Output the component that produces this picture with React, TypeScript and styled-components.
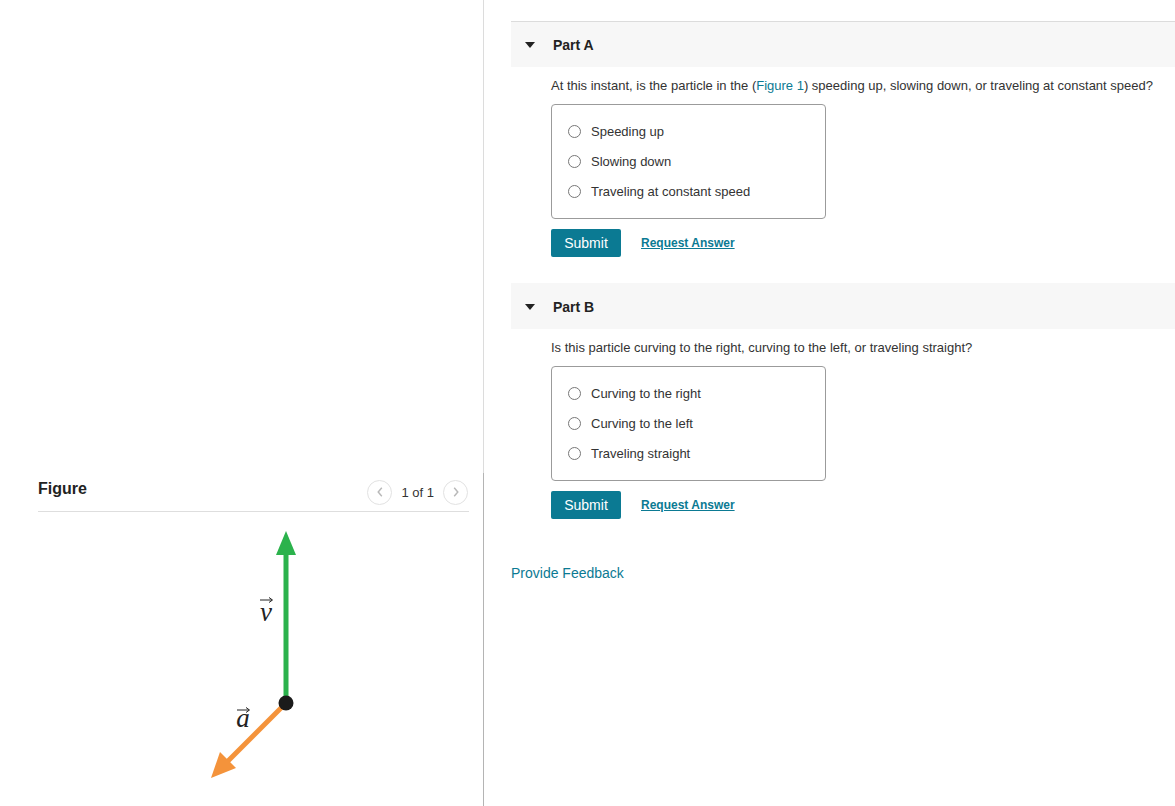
import * as React from 'react'
import styled, { createGlobalStyle } from 'styled-components'

const GlobalStyle = createGlobalStyle`
  html, body {
    margin: 0;
    padding: 0;
    background: #fff;
  }
  body {
    font-family: 'Liberation Sans', Arial, sans-serif;
    color: #333;
  }
`

const teal = '#0b7a93'

type Part = {
  title: string
  question: React.ReactNode
  options: string[]
}

// built lazily so the styled link below is defined by then
const getParts = (): Part[] => [
  {
    title: 'Part A',
    question: (
      <>
        At this instant, is the particle in the (<FigureLink>Figure 1</FigureLink>) speeding up, slowing down, or
        traveling at constant speed?
      </>
    ),
    options: ['Speeding up', 'Slowing down', 'Traveling at constant speed'],
  },
  {
    title: 'Part B',
    question: 'Is this particle curving to the right, curving to the left, or traveling straight?',
    options: ['Curving to the right', 'Curving to the left', 'Traveling straight'],
  },
]

const App: React.FC = () => {
  const [answers, setAnswers] = React.useState<Record<string, string>>({})
  const parts = getParts()

  return (
    <Page>
      <GlobalStyle />
      <LeftPane>
        <FigurePanel>
          <FigureHeader>
            <FigureTitle>Figure</FigureTitle>
            <Pager>
              <NavButton aria-label="previous">
                <Chevron viewBox="0 0 10 10">
                  <path d="M6.5 1.5 L3.5 5 L6.5 8.5" />
                </Chevron>
              </NavButton>
              <PageCount>1 of 1</PageCount>
              <NavButton aria-label="next">
                <Chevron viewBox="0 0 10 10">
                  <path d="M3.5 1.5 L6.5 5 L3.5 8.5" />
                </Chevron>
              </NavButton>
            </Pager>
          </FigureHeader>
          <Drawing width="432" height="293" viewBox="0 0 432 293">
            {/* velocity */}
            <line x1="248" y1="191" x2="248" y2="40" stroke="#2bb24c" strokeWidth="5" />
            <polygon points="238,43 258,43 248,19" fill="#2bb24c" />
            {/* acceleration */}
            <line x1="248" y1="191" x2="189" y2="250" stroke="#f4933b" strokeWidth="5" />
            <polygon points="198,256 182,240 173,266" fill="#f4933b" />
            <circle cx="248" cy="191" r="7.5" fill="#1b1b1b" />
            <VecLabel x="228" y="109">v</VecLabel>
            <path d="M222 88 H234 M231 85.5 L234.5 88 L231 90.5" stroke="#222" strokeWidth="1" fill="none" />
            <VecLabel x="205" y="215">a</VecLabel>
            <path d="M199 198 H211 M208 195.5 L211.5 198 L208 200.5" stroke="#222" strokeWidth="1" fill="none" />
          </Drawing>
        </FigurePanel>
      </LeftPane>

      <RightPane>
        {parts.map((part) => (
          <Section key={part.title}>
            <PartHeader $first={part.title === 'Part A'}>
              <Caret viewBox="0 0 10 6">
                <polygon points="0,0 10,0 5,6" />
              </Caret>
              <PartTitle>{part.title}</PartTitle>
            </PartHeader>
            <PartBody>
              <Question>{part.question}</Question>
              <Choices>
                {part.options.map((opt) => (
                  <Choice key={opt}>
                    <Radio
                      type="radio"
                      name={part.title}
                      checked={answers[part.title] === opt}
                      onChange={() => setAnswers({ ...answers, [part.title]: opt })}
                    />
                    {opt}
                  </Choice>
                ))}
              </Choices>
              <Actions>
                <SubmitButton>Submit</SubmitButton>
                <RequestLink href="#">Request Answer</RequestLink>
              </Actions>
            </PartBody>
          </Section>
        ))}
        <Feedback href="#">Provide Feedback</Feedback>
      </RightPane>
    </Page>
  )
}

const Page = styled.div`
  display: grid;
  grid-template-columns: 484px 1fr;
  height: 806px;
  overflow: hidden;
`

const LeftPane = styled.div`
  display: flex;
  flex-direction: column;
  justify-content: flex-end;
  border-right: 1px solid #dcdcdc;
`

const FigurePanel = styled.div`
  height: 333px;
  margin-right: -1px;
  padding: 0 14px 0 38px;
  border-right: 1px solid #b4b4b4;
  display: flex;
  flex-direction: column;
`

const FigureHeader = styled.div`
  display: flex;
  align-items: center;
  justify-content: space-between;
  height: 38px;
  border-bottom: 1px solid #dedede;
`

const FigureTitle = styled.h2`
  margin: 0 0 6px;
  font-size: 16px;
  font-weight: bold;
  color: #222;
`

const Pager = styled.div`
  display: flex;
  align-items: center;
  gap: 9px;
  margin-right: 1px;
`

const NavButton = styled.button`
  width: 25px;
  height: 25px;
  padding: 0;
  border: 1px solid #e2e2e2;
  border-radius: 50%;
  background: #fff;
  display: flex;
  align-items: center;
  justify-content: center;
`

const Chevron = styled.svg`
  width: 12px;
  height: 12px;
  fill: none;
  stroke: #b8b8b8;
  stroke-width: 1.2;
`

const PageCount = styled.span`
  font-size: 13px;
  color: #333;
`

const Drawing = styled.svg`
  display: block;
`

const VecLabel = styled.text`
  font-family: 'Liberation Serif', 'Times New Roman', serif;
  font-style: italic;
  font-size: 27px;
  fill: #222;
  text-anchor: middle;
`

const RightPane = styled.div`
  padding: 21px 0 0 27px;
  display: flex;
  flex-direction: column;
  align-items: flex-start;
`

const Section = styled.section`
  align-self: stretch;
  margin-bottom: 26px;
`

const PartHeader = styled.div<{ $first?: boolean }>`
  display: flex;
  align-items: center;
  height: 46px;
  padding-left: 14px;
  background: #f7f7f7;
  border-top: 1px solid ${(p) => (p.$first ? '#dcdcdc' : '#f7f7f7')};
  box-sizing: border-box;
`

const Caret = styled.svg`
  width: 10px;
  height: 6px;
  fill: #222;
  margin-right: 18px;
`

const PartTitle = styled.h3`
  margin: 0;
  font-size: 14px;
  font-weight: bold;
  color: #222;
`

const PartBody = styled.div`
  padding-left: 40px;
`

const Question = styled.p`
  margin: 10px 0 10px;
  font-size: 13px;
  line-height: 17px;
  color: #333;
`

const FigureLink = styled.a`
  color: ${teal};
  text-decoration: none;
`

const Choices = styled.div`
  width: 273px;
  padding: 11px 0 12px;
  border: 1px solid #9b9b9b;
  border-radius: 4px;
`

const Choice = styled.label`
  display: flex;
  align-items: center;
  height: 30px;
  padding-left: 16px;
  font-size: 13px;
  color: #333;
`

const Radio = styled.input`
  width: 13px;
  height: 13px;
  margin: 0 10px 0 0;
  appearance: none;
  border: 1px solid #777;
  border-radius: 50%;
  background: #fff;
  &:checked {
    background: radial-gradient(circle, #0b7a93 0 3px, #fff 3.5px);
    border-color: ${teal};
  }
`

const Actions = styled.div`
  display: flex;
  align-items: center;
  gap: 20px;
  margin-top: 10px;
`

const SubmitButton = styled.button`
  width: 70px;
  height: 28px;
  border: none;
  border-radius: 2px;
  background: ${teal};
  color: #fff;
  font-family: inherit;
  font-size: 14px;
`

const RequestLink = styled.a`
  font-size: 12px;
  font-weight: bold;
  color: ${teal};
  text-decoration: underline;
`

const Feedback = styled.a`
  margin-top: 20px;
  font-size: 14px;
  color: ${teal};
  text-decoration: none;
`

export default App
